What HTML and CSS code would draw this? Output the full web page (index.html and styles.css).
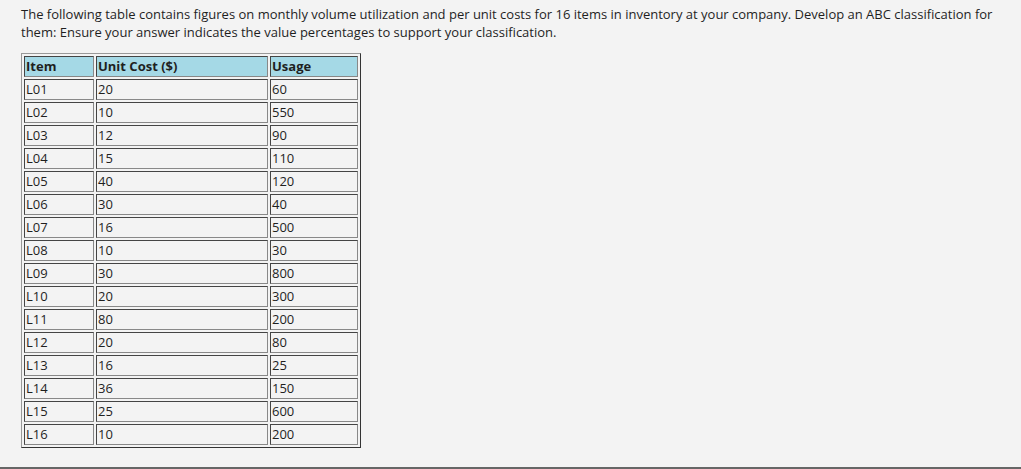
FILE: index.html
```html
<!DOCTYPE html>
<html>
<head>
<meta charset="utf-8">
<link rel="stylesheet" href="styles.css">
</head>
<body>
<div class="page">
  <p class="intro">The following table contains figures on monthly volume utilization and per unit costs for 16 items in inventory at your company. Develop an ABC classification for them: Ensure your answer indicates the value percentages to support your classification.</p>
  <table class="data">
    <thead>
      <tr><th class="c-item">Item</th><th class="c-cost">Unit Cost ($)</th><th class="c-use">Usage</th></tr>
    </thead>
    <tbody>
      <tr><td>L01</td><td>20</td><td>60</td></tr>
      <tr><td>L02</td><td>10</td><td>550</td></tr>
      <tr><td>L03</td><td>12</td><td>90</td></tr>
      <tr><td>L04</td><td>15</td><td>110</td></tr>
      <tr><td>L05</td><td>40</td><td>120</td></tr>
      <tr><td>L06</td><td>30</td><td>40</td></tr>
      <tr><td>L07</td><td>16</td><td>500</td></tr>
      <tr><td>L08</td><td>10</td><td>30</td></tr>
      <tr><td>L09</td><td>30</td><td>800</td></tr>
      <tr><td>L10</td><td>20</td><td>300</td></tr>
      <tr><td>L11</td><td>80</td><td>200</td></tr>
      <tr><td>L12</td><td>20</td><td>80</td></tr>
      <tr><td>L13</td><td>16</td><td>25</td></tr>
      <tr><td>L14</td><td>36</td><td>150</td></tr>
      <tr><td>L15</td><td>25</td><td>600</td></tr>
      <tr><td>L16</td><td>10</td><td>200</td></tr>
    </tbody>
  </table>
</div>
</body>
</html>
```

FILE: styles.css
```css
html, body {
  margin: 0;
  padding: 0;
  background: #f3f3f3;
}
body {
  font-family: "Open Sans", "DejaVu Sans", sans-serif;
  font-size: 13px;
  color: #1f1f1f;
}
.page {
  padding: 5px 21px 0 21px;
  height: 462px;
  border-bottom: 2px solid #666;
}
.intro {
  margin: 0 0 12px 0;
  line-height: 18px;
}
.data {
  border-collapse: separate;
  border-spacing: 2px;
  border-style: solid;
  border-width: 1px;
  border-color: #999 #333 #333 #999;
}
.data th,
.data td {
  border-style: solid;
  border-width: 1px;
  border-color: #444 #888 #888 #444;
  padding: 1px 1px;
  line-height: 17px;
  text-align: left;
  font-size: 13px;
}
.data th {
  background: #a5d9e6;
  font-weight: bold;
}
.c-item { width: 66px; }
.c-cost { width: 168px; }
.c-use { width: 84px; }
```
